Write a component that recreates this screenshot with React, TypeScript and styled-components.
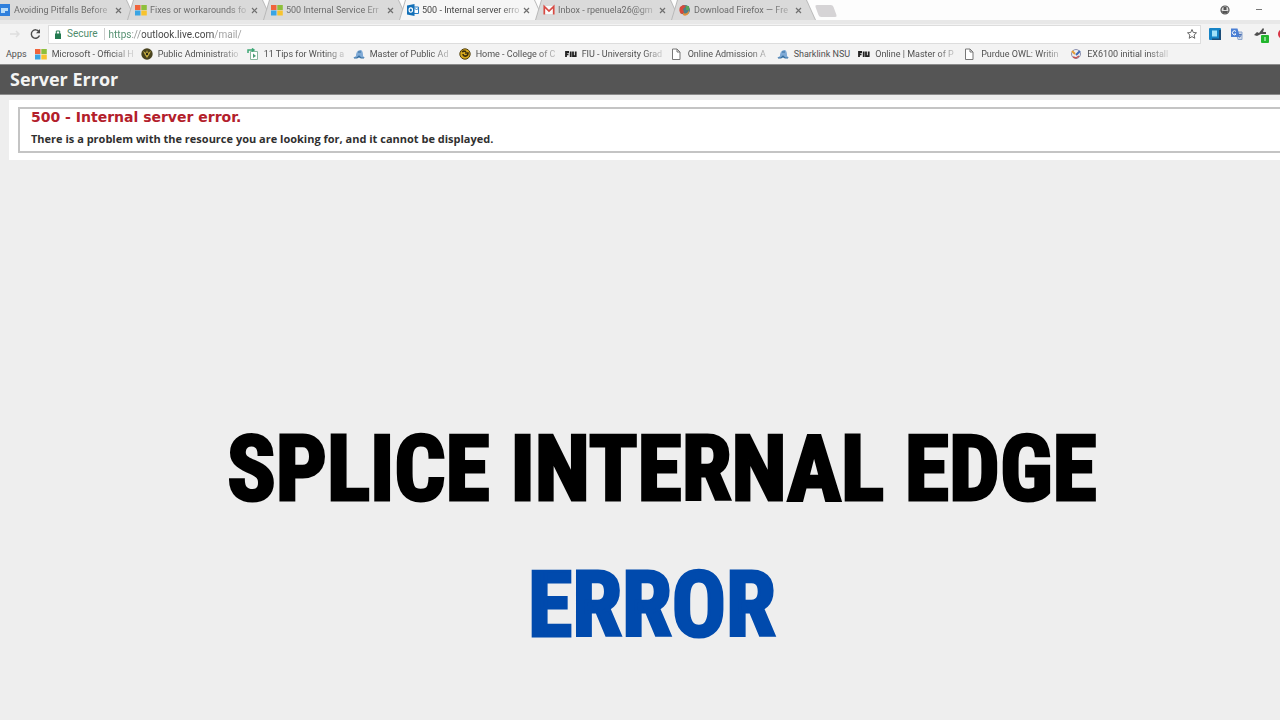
import React from "react";
import styled, { createGlobalStyle, css } from "styled-components";

const Global = createGlobalStyle`
  *, *::before, *::after { box-sizing: border-box; }
  body { margin: 0; background: #eeeeee; overflow-x: hidden; }
  button, input { font: inherit; color: inherit; border: 0; padding: 0; margin: 0; background: none; }
  h1, h2, h3, p { margin: 0; }
`;

const fade = css`
  overflow: hidden;
  white-space: nowrap;
  mask-image: linear-gradient(to right, #000 calc(100% - 20px), rgba(0, 0, 0, 0.2));
`;

const Page = styled.div`
  min-height: 100vh;
  background: #eeeeee;
  overflow: hidden;
`;

const Browser = styled.header`
  background: #f3f3f3;
  font-family: Roboto, "Noto Sans", sans-serif;
  font-size: 9px;
  color: #505050;
`;

const TabStrip = styled.div`
  display: flex;
  align-items: stretch;
  height: 20px;
  background: #fdfdfd;
`;

const Tabs = styled.div`
  display: flex;
  margin-left: -9px;
`;

const shape = "polygon(6px 0, calc(100% - 9px) 0, 100% 100%, 0 100%)";

const Tab = styled.div<{ $active?: boolean }>`
  display: flex;
  align-items: center;
  width: 145px;
  margin-right: -9px;
  padding-left: 8px;
  gap: 3px;
  position: relative;
  isolation: isolate;
  clip-path: ${shape};
  background: #b9b9b9;
  color: ${(p) => (p.$active ? "#454545" : "#6c6c6c")};
  &::before {
    content: "";
    position: absolute;
    inset: 0 1px;
    z-index: -1;
    clip-path: ${shape};
    background: ${(p) => (p.$active ? "#f6f6f6" : "#dadada")};
  }
`;

const TabTitle = styled.button`
  ${fade}
  width: 98px;
  text-align: left;
`;

const Close = styled.button`
  display: flex;
`;

const NewTab = styled.button`
  width: 18px;
  height: 12px;
  margin: 5px 0 0 10px;
  border-radius: 2px;
  background: #d6d4d6;
  transform: skewX(20deg);
`;

const WindowControls = styled.div`
  display: flex;
  align-items: center;
  gap: 25px;
  margin-left: auto;
  padding-right: 17px;
  button { display: flex; }
`;

const Toolbar = styled.div`
  display: flex;
  align-items: center;
  gap: 8px;
  height: 24px;
  border-top: 4px solid #e8e8e8;
  overflow: hidden;
  & > button { display: flex; flex: none; }
`;

const NavButtons = styled.div`
  display: flex;
  align-items: center;
  gap: 9px;
  width: 40px;
  padding-left: 9px;
  button { display: flex; }
`;

const Omnibox = styled.div`
  display: flex;
  flex: 1;
  align-items: center;
  height: 19px;
  padding: 0 2px 0 6px;
  background: #ffffff;
  border: 1px solid #dddddd;
  font-size: 10px;
  button { display: flex; }
`;

const Secure = styled.span`
  margin-left: 6px;
  padding-right: 6px;
  border-right: 1px solid #cccccc;
  line-height: 12px;
  color: #4f8c6c;
`;

const Address = styled.input`
  flex: 1;
  min-width: 0;
  margin-left: 4px;
  outline: 0;
  color: transparent;
  background: linear-gradient(to right, #4f8c6c 23px, #909090 23px 33px, #404040 33px 105px, #9a9a9a 105px);
  background-clip: text;
`;

const Bookmarks = styled.nav`
  display: flex;
  align-items: center;
  gap: 8px;
  height: 20px;
  padding-left: 6px;
  overflow: hidden;
`;

const Bookmark = styled.a<{ $short?: boolean }>`
  display: flex;
  flex: none;
  align-items: center;
  gap: 5px;
  color: #505050;
  text-decoration: none;
  svg { flex: none; }
  span {
    ${(p) => (p.$short ? "" : fade)}
    ${(p) => (p.$short ? "" : "width: 81px;")}
    white-space: nowrap;
  }
`;

const ServerBar = styled.div`
  height: 31px;
  padding-left: 10px;
  background: #555555;
  border-top: 1px solid #8c8c8c;
  border-bottom: 1px solid #8c8c8c;
  h1 {
    font: 700 18px/29px "Open Sans", "Noto Sans", sans-serif;
    color: #f4f4f4;
  }
`;

const Panel = styled.section`
  margin: 5px 0 0 9px;
  padding: 7px 0 7px 9px;
  background: #ffffff;
`;

const ErrorBox = styled.div`
  padding: 0 0 4px 11px;
  border: 2px solid #c4c4c4;
  border-right: 0;
  h2 {
    font: 700 14px/17px "DejaVu Sans", sans-serif;
    color: #b3202b;
  }
  p {
    margin-top: 5px;
    font: 700 11px/16px "Open Sans", "DejaVu Sans", sans-serif;
    color: #303030;
  }
`;

const Caption = styled.main`
  display: flex;
  flex-direction: column;
  align-items: center;
  padding: 242px 0 13px 44px;
  font: 700 90px/136px "Roboto Condensed", "Open Sans Condensed", sans-serif;
  text-align: center;
`;

const CaptionLine = styled.h2<{ $accent?: boolean }>`
  font: inherit;
  color: ${(p) => (p.$accent ? "#004aad" : "#000000")};
  padding-right: ${(p) => (p.$accent ? "20px" : "0")};
  -webkit-text-stroke: 3px currentColor;
`;

const Windows = () => (
  <svg width="12" height="12" viewBox="0 0 12 12">
    <path fill="#f0643c" d="M0 1h5.500v5H0z" />
    <path fill="#8dbf3a" d="M6.300 1h5.500v5H6.300z" />
    <path fill="#3aa5e4" d="M0 6.500h5.500v5H0z" />
    <path fill="#f7c32e" d="M6.300 6.500h5.500v5H6.300z" />
  </svg>
);
const Doc = () => (
  <svg width="12" height="12" viewBox="0 0 12 12">
    <path fill="#2f7fdc" d="M0 0h11v12H0z" />
    <path fill="#b9dcf8" d="M2 4h7v3H6v2H2z" />
  </svg>
);
const Outlook = () => (
  <svg width="12" height="12" viewBox="0 0 12 12">
    <path fill="#fff" stroke="#2b7fc4" d="M6 3h5.500v6.500H6z" />
    <path fill="#1370b8" d="M0 1.500 7.500 0v12L0 10.500z" />
    <ellipse cx="3.800" cy="6" rx="1.700" ry="2.200" fill="none" stroke="#fff" strokeWidth="1.200" />
    <path fill="none" stroke="#2b7fc4" d="m7.500 4 2 2 2-2" />
  </svg>
);
const Gmail = () => (
  <svg width="12" height="12" viewBox="0 0 12 12">
    <path fill="#fafafa" d="M1 2h10v8H1z" />
    <path fill="none" stroke="#d84a43" strokeWidth="1.700" d="M1.300 10.500V2.500L6 7l4.700-4.500v8" />
  </svg>
);
const Firefox = () => (
  <svg width="12" height="12" viewBox="0 0 12 12">
    <circle cx="6" cy="6" r="5" fill="#4d7f86" />
    <path fill="#d74b3a" d="M1 3 4 1l3 1-3 3 1 4-3 1C0 8 0 5 1 3z" />
    <path fill="#57a559" d="M7 2h3v4H7z" />
    <path fill="#e2903c" d="M4 9c3 1 5 0 6-3 1 4-3 7-6 5z" />
  </svg>
);
const Seal = () => (
  <svg width="12" height="12" viewBox="0 0 12 12">
    <circle cx="6" cy="6" r="5.700" fill="#49431f" />
    <path fill="#c9b040" d="M2 3l3 2 1-3 1 3 3-2-2 4-2 3-2-3z" />
    <circle cx="6" cy="6" r="1.200" fill="#2b2818" />
  </svg>
);
const Tips = () => (
  <svg width="12" height="12" viewBox="0 0 12 12">
    <path fill="#fff" stroke="#8bb79d" d="M3.500 3.500h7v8h-7z" />
    <path fill="none" stroke="#3fa876" strokeWidth="1.500" d="M1 5V2h6M5 .5 7 2 5 3.500" />
    <path fill="#4d9b74" d="M6 5.500 9 8l-3 2z" />
  </svg>
);
const Shark = () => (
  <svg width="12" height="12" viewBox="0 0 12 12">
    <path fill="#7faad6" d="M3 8c0-4 2-6 5-6 2 1 2 4 2 6l2 2H0z" />
    <path stroke="#376f9f" strokeWidth="1.200" fill="none" d="M1 10h3l2-2 2 2h3M5 4h3" />
  </svg>
);
const Knight = () => (
  <svg width="12" height="12" viewBox="0 0 12 12">
    <circle cx="6" cy="6" r="5.200" fill="#d8a91d" stroke="#51400f" />
    <path fill="none" stroke="#3d2f0c" strokeWidth="1.600" d="M3 4c2-2 3 0 4-1M4 6c0 3 5 3 5-1H6" />
  </svg>
);
const Fiu = () => (
  <svg width="12" height="12" viewBox="0 0 12 12">
    <path
      fill="none"
      stroke="#222"
      strokeWidth="1.800"
      d="M1 9V4h3M1 6.300h2.500M5.700 3.500V9M8 3.500v4.600h2.700V3.500"
    />
  </svg>
);
const Sheet = () => (
  <svg width="12" height="12" viewBox="0 0 12 12">
    <path fill="#fff" stroke="#777" d="M1.500 1h4.500l3 3v7.500H1.500zM6 1v3h3" />
  </svg>
);
const Netgear = () => (
  <svg width="12" height="12" viewBox="0 0 12 12">
    <circle cx="6" cy="6" r="4.500" fill="#eee" stroke="#8b8fae" />
    <path stroke="#e39a34" strokeWidth="2" d="M2 3l3 3" />
    <path stroke="#4169b4" strokeWidth="2" d="M10 3 6 7" />
    <path stroke="#c75151" strokeWidth="1.500" fill="none" d="M3 9l3 1 3-2" />
  </svg>
);

const tabs = [
  { icon: <Doc />, title: "Avoiding Pitfalls Before" },
  { icon: <Windows />, title: "Fixes or workarounds fo" },
  { icon: <Windows />, title: "500 Internal Service Err" },
  { icon: <Outlook />, title: "500 - Internal server erro", active: true },
  { icon: <Gmail />, title: "Inbox - rpenuela26@gm" },
  { icon: <Firefox />, title: "Download Firefox — Fre" },
];

const bookmarks = [
  { icon: <Windows />, title: "Microsoft - Official H" },
  { icon: <Seal />, title: "Public Administratio" },
  { icon: <Tips />, title: "11 Tips for Writing a" },
  { icon: <Shark />, title: "Master of Public Ad" },
  { icon: <Knight />, title: "Home - College of C" },
  { icon: <Fiu />, title: "FIU - University Grad" },
  { icon: <Sheet />, title: "Online Admission A" },
  { icon: <Shark />, title: "Sharklink NSU", short: true },
  { icon: <Fiu />, title: "Online | Master of P" },
  { icon: <Sheet />, title: "Purdue OWL: Writin" },
  { icon: <Netgear />, title: "EX6100 initial install" },
];

export default function App() {
  return (
    <Page>
      <Global />
      <Browser>
        <TabStrip>
          <Tabs>
            {tabs.map((t) => (
              <Tab key={t.title} $active={t.active}>
                {t.icon}
                <TabTitle>{t.title}</TabTitle>
                <Close aria-label={`Close ${t.title}`}>
                  <svg width="7" height="7" viewBox="0 0 7 7">
                    <path stroke="#707070" strokeWidth="1.200" d="m1 1 5 5M6 1 1 6" />
                  </svg>
                </Close>
              </Tab>
            ))}
          </Tabs>
          <NewTab aria-label="New tab" />
          <WindowControls>
            <button aria-label="Profile">
              <svg width="10" height="10" viewBox="0 0 10 10">
                <circle cx="5" cy="5" r="4" fill="#ddd" stroke="#555" strokeWidth="1.200" />
                <path fill="#555" d="M3.500 2h3v3h-3zM2 6h6L7 8.500H3z" />
              </svg>
            </button>
            <button aria-label="Minimize">
              <svg width="8" height="8" viewBox="0 0 8 8">
                <path stroke="#777" d="M1 3.500h6" />
              </svg>
            </button>
          </WindowControls>
        </TabStrip>
        <Toolbar>
          <NavButtons>
            <button aria-label="Forward">
              <svg width="12" height="12" viewBox="0 0 12 12">
                <path fill="none" stroke="#dedede" strokeWidth="1.500" d="M1 6h9M7 3l3 3-3 3" />
              </svg>
            </button>
            <button aria-label="Reload">
              <svg width="11" height="12" viewBox="0 0 11 12">
                <path fill="none" stroke="#4c4c4c" strokeWidth="1.400" d="M9 3.600A4.200 4.200 0 1 0 9.500 7.500" />
                <path fill="#4c4c4c" d="M10 1v4.200H6z" />
              </svg>
            </button>
          </NavButtons>
          <Omnibox>
            <svg width="6" height="9" viewBox="0 0 6 9">
              <path fill="#247a50" d="M0 3.500h6V9H0z" />
              <path fill="none" stroke="#247a50" d="M1.300 4V1h3.400v3" />
            </svg>
            <Secure>Secure</Secure>
            <Address aria-label="Address" defaultValue="https://outlook.live.com/mail/" />
            <button aria-label="Bookmark this page">
              <svg width="12" height="12" viewBox="0 0 12 12">
                <path
                  fill="none"
                  stroke="#666"
                  d="m6 1.500 1.300 3 3.200.3L8.100 7l.7 3.300L6 8.600l-2.800 1.700.7-3.300-2.400-2.200 3.200-.3z"
                />
              </svg>
            </button>
          </Omnibox>
          <button aria-label="Extension">
            <svg width="12" height="12" viewBox="0 0 12 12">
              <rect width="12" height="12" rx="1" fill="#1684c6" />
              <path fill="#1b4c77" d="M10 2h2v10H3v-1.500h7z" />
              <path fill="#a2e2f8" d="M3 2.500h5v6H3z" />
            </svg>
          </button>
          <button aria-label="Translate">
            <svg width="15" height="14" viewBox="0 0 15 14">
              <path fill="#cfd9e8" stroke="#8ea7ce" d="M7 5h6v7.500H9z" />
              <path fill="#4a7fd4" d="M2 1.500h6.500L11 10H2z" />
              <path fill="none" stroke="#fff" d="M7 4.500A2 2 0 1 0 7 7H5.500" />
              <path stroke="#4a70b4" d="M9.500 7.500h3m-2 3 2-3" />
            </svg>
          </button>
          <button aria-label="Downloads extension">
            <svg width="18" height="18" viewBox="0 0 18 18">
              <path fill="#505050" d="m2 10 3-3 2 1 4-5 1 1-1 3h3v2H9l-4 2z" />
              <rect x="9" y="10" width="8" height="8" rx="1" fill="#21b52d" />
              <path stroke="#c9f5cb" strokeWidth="1.200" d="M13 12v4" />
            </svg>
          </button>
          <button aria-label="Blocker">
            <svg width="2" height="10" viewBox="0 0 2 10">
              <circle cx="5" cy="5" r="5" fill="#d83344" />
            </svg>
          </button>
        </Toolbar>
        <Bookmarks aria-label="Bookmarks">
          <Bookmark href="#" $short>
            <span>Apps</span>
          </Bookmark>
          {bookmarks.map((b) => (
            <Bookmark key={b.title} href="#" $short={b.short}>
              {b.icon}
              <span>{b.title}</span>
            </Bookmark>
          ))}
        </Bookmarks>
      </Browser>
      <ServerBar>
        <h1>Server Error</h1>
      </ServerBar>
      <Panel>
        <ErrorBox>
          <h2>500 - Internal server error.</h2>
          <p>There is a problem with the resource you are looking for, and it cannot be displayed.</p>
        </ErrorBox>
      </Panel>
      <Caption>
        <CaptionLine>SPLICE INTERNAL EDGE</CaptionLine>
        <CaptionLine $accent>ERROR</CaptionLine>
      </Caption>
    </Page>
  );
}
